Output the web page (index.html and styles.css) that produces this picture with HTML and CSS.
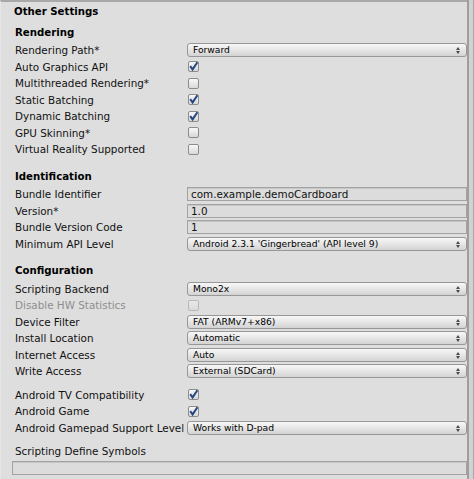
FILE: index.html
```html
<!DOCTYPE html>
<html lang="en">
<head>
    <meta charset="UTF-8">
    <title>Other Settings</title>
    <link rel="stylesheet" href="styles.css">
</head>
<body>
    <div class="window">
        <div class="panel">
            <div class="title">Other Settings</div>

            <div class="group">
                <div class="heading">Rendering</div>
                <div class="row"><span class="label">Rendering Path*</span><div class="popup">Forward</div></div>
                <div class="row"><span class="label">Auto Graphics API</span><span class="check on"><svg viewBox="0 0 11 11"><path d="M2.2 5.2 L4.6 8.4 L9.4 1.2"/></svg></span></div>
                <div class="row"><span class="label">Multithreaded Rendering*</span><span class="check"></span></div>
                <div class="row"><span class="label">Static Batching</span><span class="check on"><svg viewBox="0 0 11 11"><path d="M2.2 5.2 L4.6 8.4 L9.4 1.2"/></svg></span></div>
                <div class="row"><span class="label">Dynamic Batching</span><span class="check on"><svg viewBox="0 0 11 11"><path d="M2.2 5.2 L4.6 8.4 L9.4 1.2"/></svg></span></div>
                <div class="row"><span class="label">GPU Skinning*</span><span class="check"></span></div>
                <div class="row"><span class="label">Virtual Reality Supported</span><span class="check"></span></div>
            </div>

            <div class="group">
                <div class="heading">Identification</div>
                <div class="row"><span class="label">Bundle Identifier</span><div class="field">com.example.demoCardboard</div></div>
                <div class="row"><span class="label">Version*</span><div class="field">1.0</div></div>
                <div class="row"><span class="label">Bundle Version Code</span><div class="field">1</div></div>
                <div class="row"><span class="label">Minimum API Level</span><div class="popup">Android 2.3.1 'Gingerbread' (API level 9)</div></div>
            </div>

            <div class="group">
                <div class="heading">Configuration</div>
                <div class="row"><span class="label">Scripting Backend</span><div class="popup">Mono2x</div></div>
                <div class="row"><span class="label disabled">Disable HW Statistics</span><span class="check disabled"></span></div>
                <div class="row"><span class="label">Device Filter</span><div class="popup">FAT (ARMv7+x86)</div></div>
                <div class="row"><span class="label">Install Location</span><div class="popup">Automatic</div></div>
                <div class="row"><span class="label">Internet Access</span><div class="popup">Auto</div></div>
                <div class="row"><span class="label">Write Access</span><div class="popup">External (SDCard)</div></div>
            </div>

            <div class="group tight">
                <div class="row"><span class="label">Android TV Compatibility</span><span class="check on"><svg viewBox="0 0 11 11"><path d="M2.2 5.2 L4.6 8.4 L9.4 1.2"/></svg></span></div>
                <div class="row"><span class="label">Android Game</span><span class="check on"><svg viewBox="0 0 11 11"><path d="M2.2 5.2 L4.6 8.4 L9.4 1.2"/></svg></span></div>
                <div class="row"><span class="label">Android Gamepad Support Level</span><div class="popup">Works with D-pad</div></div>
            </div>

            <div class="symbols">
                <div class="label">Scripting Define Symbols</div>
                <div class="field wide"></div>
            </div>
        </div>
        <div class="scrollbar"></div>
    </div>
</body>
</html>
```

FILE: styles.css
```css
html, body {
    margin: 0;
    padding: 0;
    background: #dedede;
}
body {
    font-family: "DejaVu Sans", Verdana, sans-serif;
    font-size: 10.4px;
    color: #111;
}
.window {
    display: flex;
    width: 474px;
    height: 479px;
    overflow: hidden;
}
.panel {
    width: 467px;
    padding: 0 0 0 14px;
    box-sizing: border-box;
    border-top: 2px solid #a9a9a9;
    border-left: 1px solid #e6e6e6;
}
.scrollbar {
    width: 7px;
    border-left: 2px solid #9e9e9e;
    border-right: 1px solid #a8a8a8;
    background: #d2d2d2;
    box-sizing: border-box;
    flex: 1;
}
.title {
    font-weight: bold;
    font-size: 10.2px;
    height: 16.5px;
    line-height: 16.5px;
    margin: 2px 0 0 -1px;
    color: #000;
}
.group {
    margin-top: 4px;
}
.group + .group {
    margin-top: 11px;
}
.group.tight {
    margin-top: 7px;
}
.heading {
    font-weight: bold;
    font-size: 10.2px;
    height: 16.5px;
    line-height: 16.5px;
    margin-bottom: 1px;
    color: #000;
}
.row {
    display: grid;
    grid-template-columns: 172px 1fr;
    align-items: center;
    height: 16.5px;
}
.label {
    white-space: nowrap;
    line-height: 16.5px;
}
.label.disabled {
    color: #8e8e8e;
}
.popup {
    position: relative;
    height: 14px;
    box-sizing: border-box;
    border: 1px solid #979797;
    border-radius: 3px;
    background: linear-gradient(#f7f7f7, #e6e6e6 50%, #d3d3d3);
    padding-left: 5px;
    font-size: 9.2px;
    line-height: 12px;
    color: #000;
    white-space: nowrap;
}
.popup::before,
.popup::after {
    content: "";
    position: absolute;
    right: 6px;
    border-left: 2px solid transparent;
    border-right: 2px solid transparent;
}
.popup::before {
    top: 3px;
    border-bottom: 3px solid #4a4a4a;
}
.popup::after {
    top: 7px;
    border-top: 3px solid #4a4a4a;
}
.field {
    height: 14px;
    box-sizing: border-box;
    border: 1px solid #a3a3a3;
    background: #dcdcdc;
    box-shadow: inset 0 1px 0 #c6c6c6;
    padding-left: 3px;
    line-height: 12px;
    white-space: nowrap;
}
.check {
    display: block;
    width: 11px;
    height: 11px;
    margin-left: 1px;
    box-sizing: border-box;
    border: 1px solid #8c8c8c;
    border-radius: 2px;
    background: linear-gradient(#f8f8f8, #d8d8d8);
    position: relative;
}
.check svg {
    position: absolute;
    left: -1px;
    top: -1px;
    width: 11px;
    height: 11px;
    fill: none;
    stroke: #25477f;
    stroke-width: 2;
}
.check.disabled {
    opacity: 0.45;
}
.symbols {
    margin-top: 6.5px;
}
.symbols .label {
    height: 16.5px;
}
.field.wide {
    margin: 1.5px 0 0 -3px;
    height: 14.5px;
}
```
